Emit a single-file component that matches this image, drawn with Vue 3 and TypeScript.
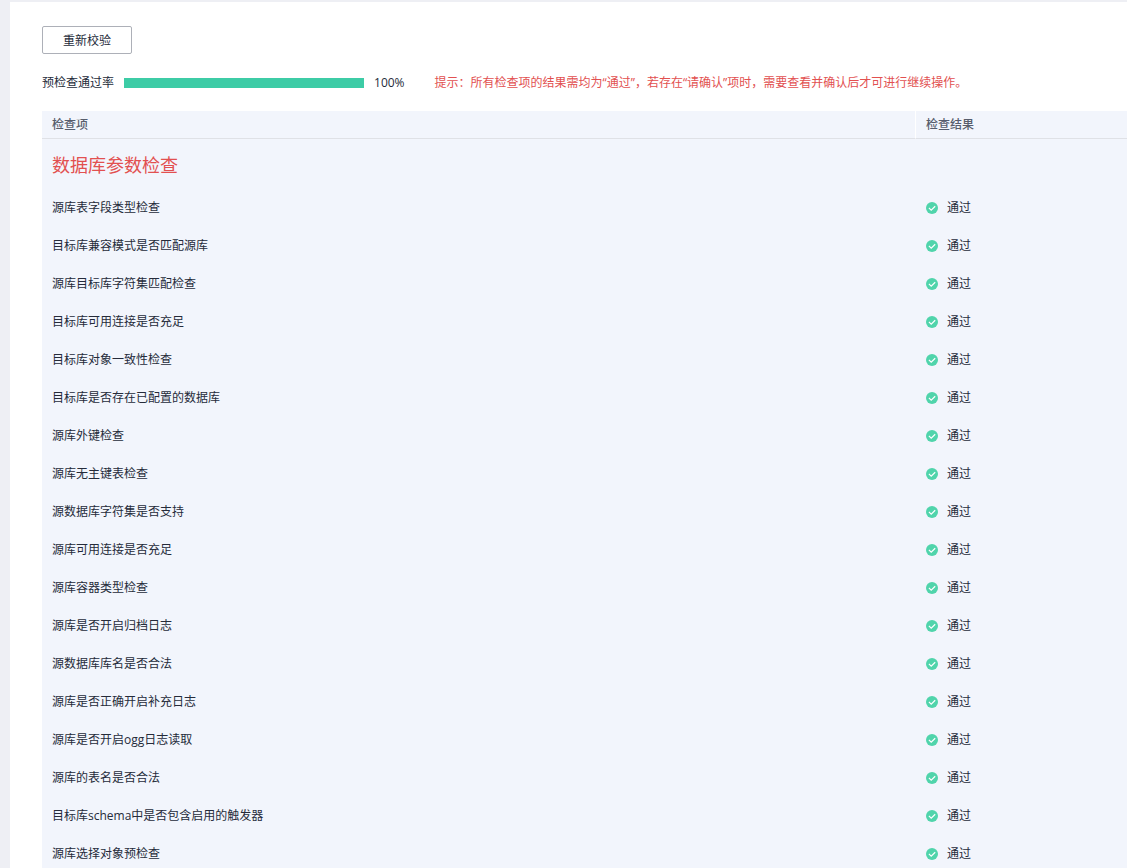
<script setup lang="ts">
import { ref } from 'vue'

interface CheckItem {
  name: string
  result: string
}

const passRate = ref<number>(100)

const groupTitle = '数据库参数检查'

const items = ref<CheckItem[]>(
  [
    '源库表字段类型检查',
    '目标库兼容模式是否匹配源库',
    '源库目标库字符集匹配检查',
    '目标库可用连接是否充足',
    '目标库对象一致性检查',
    '目标库是否存在已配置的数据库',
    '源库外键检查',
    '源库无主键表检查',
    '源数据库字符集是否支持',
    '源库可用连接是否充足',
    '源库容器类型检查',
    '源库是否开启归档日志',
    '源数据库库名是否合法',
    '源库是否正确开启补充日志',
    '源库是否开启ogg日志读取',
    '源库的表名是否合法',
    '目标库schema中是否包含启用的触发器',
    '源库选择对象预检查',
  ].map((name) => ({ name, result: '通过' })),
)
</script>

<template>
  <div class="page">
    <main class="panel">
      <button type="button" class="recheck">重新校验</button>

      <div class="summary">
        <span id="rate-label">预检查通过率</span>
        <div
          class="bar"
          role="progressbar"
          aria-labelledby="rate-label"
          aria-valuemin="0"
          aria-valuemax="100"
          :aria-valuenow="passRate"
        >
          <div class="bar-fill" :style="{ width: passRate + '%' }"></div>
        </div>
        <span class="rate">{{ passRate }}%</span>
        <span class="tip">提示：所有检查项的结果需均为“通过”，若存在“请确认”项时，需要查看并确认后才可进行继续操作。</span>
      </div>

      <table class="checks">
        <colgroup>
          <col />
          <col class="col-result" />
        </colgroup>
        <thead>
          <tr>
            <th scope="col">检查项</th>
            <th scope="col">检查结果</th>
          </tr>
        </thead>
        <tbody>
          <tr class="group">
            <th scope="rowgroup" colspan="2">{{ groupTitle }}</th>
          </tr>
          <tr v-for="item in items" :key="item.name">
            <td>{{ item.name }}</td>
            <td>
              <span class="result">
                <svg class="ok" viewBox="0 0 12 12" aria-hidden="true">
                  <circle cx="6" cy="6" r="6" fill="#50d4ab" />
                  <path d="M2.9 5.9 5.2 8.1 9.2 4.2" fill="none" stroke="#fff" stroke-width="1.2" />
                </svg>
                <span>{{ item.result }}</span>
              </span>
            </td>
          </tr>
        </tbody>
      </table>
    </main>
  </div>
</template>

<style>
body {
  margin: 0;
}
</style>

<style scoped>
.page {
  box-sizing: border-box;
  height: 100vh;
  overflow-y: auto;
  scrollbar-width: none;
  padding: 2px 0 0 10px;
  background: #eeeff4;
  color: #252b3a;
  font-family: 'Open Sans', 'Noto Sans CJK SC', sans-serif;
  font-size: 12px;
  line-height: 18px;
}

.panel {
  padding: 24px 0 0 32px;
  background: #fff;
}

.recheck {
  display: block;
  height: 28px;
  padding: 2px 20px 0;
  border: 1px solid #adb0b8;
  border-radius: 2px;
  background: #fff;
  color: #252b3a;
  font: inherit;
  cursor: pointer;
}

.summary {
  display: flex;
  align-items: center;
  margin: 20px 0 19px;
  white-space: nowrap;
}

.bar {
  width: 240px;
  height: 10px;
  margin: 0 10px;
  background: #e9edfa;
}

.bar-fill {
  height: 100%;
  background: #3dcca6;
}

.tip {
  margin-left: 30px;
  color: #e25050;
}

.checks {
  width: 100%;
  table-layout: fixed;
  border-collapse: separate;
  border-spacing: 0;
  background: #f2f5fc;
}

.col-result {
  width: 212px;
}

.checks th,
.checks td {
  padding: 0 10px;
  text-align: left;
  font-weight: 400;
}

.checks td {
  height: 38px;
}

.checks thead th {
  height: 27px;
  border-bottom: 1px solid #dfe1e6;
  color: #575d6c;
  font-weight: 500;
}

.checks thead th + th {
  border-left: 1px solid #fff;
}

.checks .group th {
  height: 48px;
  padding-top: 2px;
  color: #e25050;
  font-size: 18px;
  line-height: 26px;
}

.result {
  display: flex;
  align-items: center;
  gap: 9px;
}

.ok {
  width: 12px;
  height: 12px;
  margin-left: 1px;
}
</style>
